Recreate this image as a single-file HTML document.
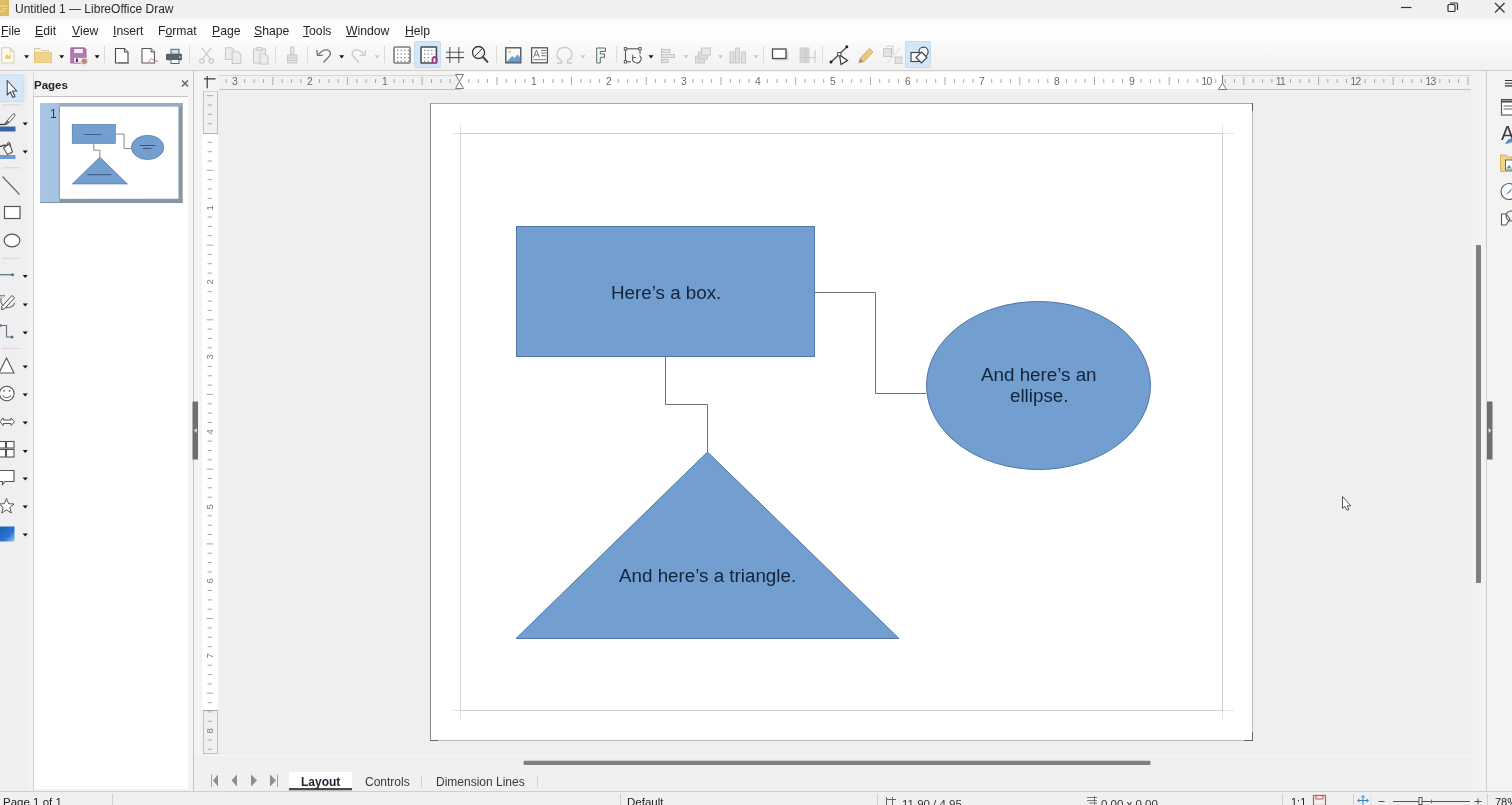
<!DOCTYPE html><html><head><meta charset="utf-8"><style>

*{margin:0;padding:0;box-sizing:border-box}
html,body{width:1512px;height:805px;overflow:hidden;background:#f0f0f0;font-family:"Liberation Sans",sans-serif;color:#1b1b1b}
body{position:relative}
.a{position:absolute}
.t{position:absolute;white-space:nowrap;line-height:1;z-index:2;will-change:transform}
.m{position:absolute;z-index:2;will-change:transform;top:24.8px;font-size:12.2px;color:#262626;white-space:nowrap;line-height:1}
.m u{text-decoration:underline;text-underline-offset:1px;text-decoration-thickness:1px}
svg{position:absolute;left:0;top:0;z-index:1}

</style></head><body>
<div class="a" style="left:0px;top:0px;width:1512px;height:20px;background:linear-gradient(#f0f0f0 0,#f1f1f1 80%,#f8f8f8 100%)"></div>
<div class="a" style="left:0px;top:20px;width:1512px;height:21px;background:#fdfdfd"></div>
<div class="a" style="left:0px;top:41px;width:1512px;height:29px;background:linear-gradient(#fbfbfb,#f1f1f1)"></div>
<div class="a" style="left:0px;top:70px;width:1512px;height:1px;background:#cdcdcd"></div>
<div class="a" style="left:0px;top:71px;width:33px;height:720px;background:#f0eef0"></div>
<div class="a" style="left:28px;top:71px;width:5px;height:720px;background:#f4f3f4"></div>
<div class="a" style="left:33px;top:71px;width:1px;height:720px;background:#d9d9d9"></div>
<div class="a" style="left:34px;top:71px;width:159px;height:720px;background:#f3f3f3"></div>
<div class="a" style="left:33px;top:96px;width:155px;height:693px;background:#fff;border-left:1px solid #cfcfcf;border-top:1px solid #c4c4c4"></div>
<div class="a" style="left:193px;top:71px;width:1px;height:720px;background:#c6c6c6"></div>
<div class="a" style="left:194px;top:71px;width:1293px;height:720px;background:#f0eef1"></div>
<div class="a" style="left:194px;top:71px;width:9px;height:684px;background:#f4f3f4"></div>
<div class="a" style="left:194px;top:71px;width:1277px;height:4px;background:#f4f3f4"></div>
<div class="a" style="left:194px;top:71px;width:25px;height:20px;background:#f4f3f4"></div>
<div class="a" style="left:1471px;top:71px;width:15px;height:720px;background:#f3f2f3"></div>
<div class="a" style="left:194px;top:755px;width:1277px;height:36px;background:#f0f0f0;border-top:1px solid #f7f7f7"></div>
<div class="a" style="left:1486px;top:71px;width:1px;height:720px;background:#cfcfcf"></div>
<div class="a" style="left:1487px;top:71px;width:25px;height:720px;background:#f3f3f3"></div>
<div class="a" style="left:430px;top:103px;width:823px;height:638px;background:#fff;border-left:1px solid #8a8a8a;border-top:1px solid #a8a8a8;border-right:1px solid #bdbdbd;border-bottom:1px solid #bdbdbd"></div>
<div class="a" style="left:1252px;top:103px;width:1px;height:8px;background:#555"></div>
<div class="a" style="left:430px;top:740px;width:8px;height:1px;background:#666"></div>
<div class="a" style="left:1252px;top:732px;width:1px;height:9px;background:#666"></div>
<div class="a" style="left:1244px;top:740px;width:9px;height:1px;background:#666"></div>
<div class="a" style="left:0px;top:791px;width:1512px;height:14px;background:#f0f0f0;border-top:1px solid #cfcfcf"></div>
<div class="t" style="left:14.5px;top:2.5px;font-size:12px;color:#2a2a2a;">Untitled 1 — LibreOffice Draw</div>
<div class="m" style="left:1px"><u>F</u>ile</div>
<div class="m" style="left:35px"><u>E</u>dit</div>
<div class="m" style="left:72px"><u>V</u>iew</div>
<div class="m" style="left:113px"><u>I</u>nsert</div>
<div class="m" style="left:158px">F<u>o</u>rmat</div>
<div class="m" style="left:211.5px"><u>P</u>age</div>
<div class="m" style="left:254px"><u>S</u>hape</div>
<div class="m" style="left:302.8px"><u>T</u>ools</div>
<div class="m" style="left:345.8px"><u>W</u>indow</div>
<div class="m" style="left:405px"><u>H</u>elp</div>
<div class="a" style="left:219px;top:75px;width:241px;height:15px;background:#f2f1f2;border-top:1px solid #d6d6d6;border-bottom:1px solid #c2c2c2"></div>
<div class="a" style="left:1223px;top:75px;width:248px;height:15px;background:#f2f1f2;border-top:1px solid #d6d6d6;border-bottom:1px solid #c2c2c2"></div>
<div class="a" style="left:459px;top:72px;width:764px;height:17px;background:#fff"></div>
<div class="t" style="left:225.4px;top:77.2px;width:19px;text-align:center;font-size:10.3px;letter-spacing:-0.7px;color:#6a6a6a">3</div>
<div class="t" style="left:300.1px;top:77.2px;width:19px;text-align:center;font-size:10.3px;letter-spacing:-0.7px;color:#6a6a6a">2</div>
<div class="t" style="left:374.8px;top:77.2px;width:19px;text-align:center;font-size:10.3px;letter-spacing:-0.7px;color:#6a6a6a">1</div>
<div class="t" style="left:524.2px;top:77.2px;width:19px;text-align:center;font-size:10.3px;letter-spacing:-0.7px;color:#6a6a6a">1</div>
<div class="t" style="left:598.9px;top:77.2px;width:19px;text-align:center;font-size:10.3px;letter-spacing:-0.7px;color:#6a6a6a">2</div>
<div class="t" style="left:673.6px;top:77.2px;width:19px;text-align:center;font-size:10.3px;letter-spacing:-0.7px;color:#6a6a6a">3</div>
<div class="t" style="left:748.3px;top:77.2px;width:19px;text-align:center;font-size:10.3px;letter-spacing:-0.7px;color:#6a6a6a">4</div>
<div class="t" style="left:823.0px;top:77.2px;width:19px;text-align:center;font-size:10.3px;letter-spacing:-0.7px;color:#6a6a6a">5</div>
<div class="t" style="left:897.7px;top:77.2px;width:19px;text-align:center;font-size:10.3px;letter-spacing:-0.7px;color:#6a6a6a">6</div>
<div class="t" style="left:972.4px;top:77.2px;width:19px;text-align:center;font-size:10.3px;letter-spacing:-0.7px;color:#6a6a6a">7</div>
<div class="t" style="left:1047.1px;top:77.2px;width:19px;text-align:center;font-size:10.3px;letter-spacing:-0.7px;color:#6a6a6a">8</div>
<div class="t" style="left:1121.8px;top:77.2px;width:19px;text-align:center;font-size:10.3px;letter-spacing:-0.7px;color:#6a6a6a">9</div>
<div class="t" style="left:1196.5px;top:77.2px;width:19px;text-align:center;font-size:10.3px;letter-spacing:-0.7px;color:#6a6a6a">10</div>
<div class="t" style="left:1271.2px;top:77.2px;width:19px;text-align:center;font-size:10.3px;letter-spacing:-0.7px;color:#6a6a6a">11</div>
<div class="t" style="left:1345.9px;top:77.2px;width:19px;text-align:center;font-size:10.3px;letter-spacing:-0.7px;color:#6a6a6a">12</div>
<div class="t" style="left:1420.6px;top:77.2px;width:19px;text-align:center;font-size:10.3px;letter-spacing:-0.7px;color:#6a6a6a">13</div>
<div class="a" style="left:203px;top:91px;width:15px;height:43px;background:#f2f1f2;border:1px solid #c2c2c2;border-top:1px solid #d6d6d6;border-bottom:1px solid #b0b0b0"></div>
<div class="a" style="left:203px;top:710px;width:15px;height:44px;background:#f0f0f0;border:1px solid #c2c2c2;border-top:1px solid #a8a8a8"></div>
<div class="a" style="left:202px;top:134px;width:16px;height:576px;background:#fff"></div>
<div class="t" style="left:199.5px;top:202.7px;width:20px;height:10px;text-align:center;font-size:9.5px;letter-spacing:-0.5px;color:#7a7a7a;transform:rotate(-90deg)">1</div>
<div class="t" style="left:199.5px;top:277.4px;width:20px;height:10px;text-align:center;font-size:9.5px;letter-spacing:-0.5px;color:#7a7a7a;transform:rotate(-90deg)">2</div>
<div class="t" style="left:199.5px;top:352.1px;width:20px;height:10px;text-align:center;font-size:9.5px;letter-spacing:-0.5px;color:#7a7a7a;transform:rotate(-90deg)">3</div>
<div class="t" style="left:199.5px;top:426.8px;width:20px;height:10px;text-align:center;font-size:9.5px;letter-spacing:-0.5px;color:#7a7a7a;transform:rotate(-90deg)">4</div>
<div class="t" style="left:199.5px;top:501.5px;width:20px;height:10px;text-align:center;font-size:9.5px;letter-spacing:-0.5px;color:#7a7a7a;transform:rotate(-90deg)">5</div>
<div class="t" style="left:199.5px;top:576.2px;width:20px;height:10px;text-align:center;font-size:9.5px;letter-spacing:-0.5px;color:#7a7a7a;transform:rotate(-90deg)">6</div>
<div class="t" style="left:199.5px;top:650.9px;width:20px;height:10px;text-align:center;font-size:9.5px;letter-spacing:-0.5px;color:#7a7a7a;transform:rotate(-90deg)">7</div>
<div class="t" style="left:199.5px;top:725.6px;width:20px;height:10px;text-align:center;font-size:9.5px;letter-spacing:-0.5px;color:#7a7a7a;transform:rotate(-90deg)">8</div>
<div class="t" style="left:611px;top:284px;font-size:18.8px;color:#13233a;">Here’s a box.</div>
<div class="t" style="left:980.5px;top:366px;font-size:18.8px;color:#13233a;">And here’s an</div>
<div class="t" style="left:1010px;top:386.5px;font-size:18.8px;color:#13233a;">ellipse.</div>
<div class="t" style="left:619px;top:567px;font-size:18.8px;color:#13233a;">And here’s a triangle.</div>
<div class="t" style="left:34px;top:79.5px;font-size:11.5px;font-weight:bold;color:#222">Pages</div>
<div class="t" style="left:49.5px;top:108px;font-size:12px;color:#2e3c4c">1</div>
<div class="t" style="left:1500.5px;top:124px;font-size:19.5px;color:#3b3b3b">A</div>
<div class="t" style="left:301px;top:775.5px;font-size:12px;font-weight:bold;color:#1c2330">Layout</div>
<div class="t" style="left:365px;top:775.5px;font-size:12px;color:#3a3a3a">Controls</div>
<div class="t" style="left:435.5px;top:775.5px;font-size:12px;color:#3a3a3a">Dimension Lines</div>
<div class="t" style="left:3px;top:797px;font-size:11.5px;color:#222">Page 1 of 1</div>
<div class="t" style="left:627px;top:797px;font-size:11.5px;color:#222">Default</div>
<div class="t" style="left:902px;top:798.5px;font-size:11.5px;color:#333">11.90 / 4.95</div>
<div class="t" style="left:1101px;top:798.5px;font-size:11.5px;color:#333">0.00 x 0.00</div>
<div class="t" style="left:1291px;top:797px;font-size:11px;color:#222">1:1</div>
<div class="t" style="left:1495px;top:797px;font-size:11px;color:#222">78%</div>
<svg width="1512" height="805" viewBox="0 0 1512 805"><path d="M-4 -1 H9 V16 H-4 Z" fill="#dcbc66"/><path d="M0 6 H7 M3 8.5 H7 M0 11 H5" stroke="#f2dc9c" stroke-width="1.2"/><path d="M1401 7.5 H1411.5" stroke="#333" stroke-width="1.2"/><rect x="1448" y="4.5" width="7" height="7" rx="1" fill="none" stroke="#333" stroke-width="1.2"/><path d="M1450 3 H1456.5 Q1457.5 3 1457.5 4 V10" fill="none" stroke="#333" stroke-width="1.2"/><path d="M1495 3 L1504.5 12.5 M1504.5 3 L1495 12.5" stroke="#333" stroke-width="1.2"/><path d="M226.1 79.0 V83.0 M244.7 79.0 V83.0 M254.1 79.0 V83.0 M263.4 79.0 V83.0 M272.8 77.0 V85.0 M282.1 79.0 V83.0 M291.4 79.0 V83.0 M300.8 79.0 V83.0 M319.4 79.0 V83.0 M328.8 79.0 V83.0 M338.1 79.0 V83.0 M347.4 77.0 V85.0 M356.8 79.0 V83.0 M366.1 79.0 V83.0 M375.5 79.0 V83.0 M394.1 79.0 V83.0 M403.5 79.0 V83.0 M412.8 79.0 V83.0 M422.1 77.0 V85.0 M431.5 79.0 V83.0 M440.8 79.0 V83.0 M450.2 79.0 V83.0 M468.8 79.0 V83.0 M478.2 79.0 V83.0 M487.5 79.0 V83.0 M496.9 77.0 V85.0 M506.2 79.0 V83.0 M515.5 79.0 V83.0 M524.9 79.0 V83.0 M543.5 79.0 V83.0 M552.9 79.0 V83.0 M562.2 79.0 V83.0 M571.5 77.0 V85.0 M580.9 79.0 V83.0 M590.2 79.0 V83.0 M599.6 79.0 V83.0 M618.2 79.0 V83.0 M627.6 79.0 V83.0 M636.9 79.0 V83.0 M646.2 77.0 V85.0 M655.6 79.0 V83.0 M664.9 79.0 V83.0 M674.3 79.0 V83.0 M692.9 79.0 V83.0 M702.3 79.0 V83.0 M711.6 79.0 V83.0 M721.0 77.0 V85.0 M730.3 79.0 V83.0 M739.6 79.0 V83.0 M749.0 79.0 V83.0 M767.6 79.0 V83.0 M777.0 79.0 V83.0 M786.3 79.0 V83.0 M795.7 77.0 V85.0 M805.0 79.0 V83.0 M814.3 79.0 V83.0 M823.7 79.0 V83.0 M842.3 79.0 V83.0 M851.7 79.0 V83.0 M861.0 79.0 V83.0 M870.4 77.0 V85.0 M879.7 79.0 V83.0 M889.0 79.0 V83.0 M898.4 79.0 V83.0 M917.0 79.0 V83.0 M926.4 79.0 V83.0 M935.7 79.0 V83.0 M945.0 77.0 V85.0 M954.4 79.0 V83.0 M963.7 79.0 V83.0 M973.1 79.0 V83.0 M991.7 79.0 V83.0 M1001.1 79.0 V83.0 M1010.4 79.0 V83.0 M1019.8 77.0 V85.0 M1029.1 79.0 V83.0 M1038.4 79.0 V83.0 M1047.8 79.0 V83.0 M1066.4 79.0 V83.0 M1075.8 79.0 V83.0 M1085.1 79.0 V83.0 M1094.5 77.0 V85.0 M1103.8 79.0 V83.0 M1113.1 79.0 V83.0 M1122.5 79.0 V83.0 M1141.1 79.0 V83.0 M1150.5 79.0 V83.0 M1159.8 79.0 V83.0 M1169.2 77.0 V85.0 M1178.5 79.0 V83.0 M1187.8 79.0 V83.0 M1197.2 79.0 V83.0 M1215.8 79.0 V83.0 M1225.2 79.0 V83.0 M1234.5 79.0 V83.0 M1243.8 77.0 V85.0 M1253.2 79.0 V83.0 M1262.5 79.0 V83.0 M1271.9 79.0 V83.0 M1290.5 79.0 V83.0 M1299.9 79.0 V83.0 M1309.2 79.0 V83.0 M1318.6 77.0 V85.0 M1327.9 79.0 V83.0 M1337.2 79.0 V83.0 M1346.6 79.0 V83.0 M1365.2 79.0 V83.0 M1374.6 79.0 V83.0 M1383.9 79.0 V83.0 M1393.2 77.0 V85.0 M1402.6 79.0 V83.0 M1411.9 79.0 V83.0 M1421.3 79.0 V83.0 M1439.9 79.0 V83.0 M1449.3 79.0 V83.0 M1458.6 79.0 V83.0 M1468.0 77.0 V85.0" stroke="#a8a8a8" stroke-width="1"/><path d="M455.5 74.5 H463.5 L459.5 81.5 Z M455.5 88.5 H463.5 L459.5 81.5 Z" fill="#fff" stroke="#7a7a7a" stroke-width="1"/><path d="M1218.5 89.5 H1226.5 L1222.5 83 Z" fill="#fff" stroke="#7a7a7a" stroke-width="1"/><path d="M1222.5 75 V83" stroke="#7a7a7a"/><path d="M204 78.8 H215.5 M207.2 76 V88.3" stroke="#3a3a44" stroke-width="1.2"/><path d="M206.6 95.7 H213.1 M207.6 105.0 H212.1 M207.6 114.3 H212.1 M207.6 123.7 H212.1 M207.6 142.3 H212.1 M207.6 151.7 H212.1 M207.6 161.0 H212.1 M206.6 170.3 H213.1 M207.6 179.7 H212.1 M207.6 189.0 H212.1 M207.6 198.4 H212.1 M207.6 217.0 H212.1 M207.6 226.4 H212.1 M207.6 235.7 H212.1 M206.6 245.1 H213.1 M207.6 254.4 H212.1 M207.6 263.7 H212.1 M207.6 273.1 H212.1 M207.6 291.7 H212.1 M207.6 301.1 H212.1 M207.6 310.4 H212.1 M206.6 319.8 H213.1 M207.6 329.1 H212.1 M207.6 338.4 H212.1 M207.6 347.8 H212.1 M207.6 366.4 H212.1 M207.6 375.8 H212.1 M207.6 385.1 H212.1 M206.6 394.4 H213.1 M207.6 403.8 H212.1 M207.6 413.1 H212.1 M207.6 422.5 H212.1 M207.6 441.1 H212.1 M207.6 450.5 H212.1 M207.6 459.8 H212.1 M206.6 469.2 H213.1 M207.6 478.5 H212.1 M207.6 487.8 H212.1 M207.6 497.2 H212.1 M207.6 515.8 H212.1 M207.6 525.2 H212.1 M207.6 534.5 H212.1 M206.6 543.9 H213.1 M207.6 553.2 H212.1 M207.6 562.5 H212.1 M207.6 571.9 H212.1 M207.6 590.5 H212.1 M207.6 599.9 H212.1 M207.6 609.2 H212.1 M206.6 618.5 H213.1 M207.6 627.9 H212.1 M207.6 637.2 H212.1 M207.6 646.6 H212.1 M207.6 665.2 H212.1 M207.6 674.6 H212.1 M207.6 683.9 H212.1 M206.6 693.2 H213.1 M207.6 702.6 H212.1 M207.6 711.9 H212.1 M207.6 721.3 H212.1 M207.6 739.9 H212.1 M207.6 749.3 H212.1" stroke="#a8a8a8" stroke-width="1"/><path d="M460 133.5 H1223 M460 710.5 H1223 M460.5 133 V711 M1222.5 133 V711" stroke="#d0d0d0" stroke-width="1"/><path d="M452 133.5 H460 M1223 133.5 H1234 M452 710.5 H460 M1223 710.5 H1234 M460.5 124 V133 M1222.5 124 V133 M460.5 711 V720 M1222.5 711 V720" stroke="#e6e6e6" stroke-width="1"/><g fill="#729fcf" stroke="#4f76a6" stroke-width="1">
<rect x="516.5" y="226.5" width="298" height="130"/>
<ellipse cx="1038.5" cy="385.5" rx="112" ry="84"/>
<polygon points="707.5,452 516,638.5 899,638.5"/>
</g>
<g fill="none" stroke="#707070" stroke-width="1">
<polyline points="815,292.5 875.5,292.5 875.5,393.5 926,393.5"/>
<polyline points="665.5,357 665.5,404.5 707.5,404.5 707.5,452"/>
</g><rect x="414.5" y="41.5" width="26" height="26" rx="1.5" fill="#d5e7f6" stroke="#c3dcf1"/><rect x="905.5" y="41.5" width="25" height="26" rx="1.5" fill="#d5e7f6" stroke="#c3dcf1"/><path d="M1.8 47.8 H10 L14 51.8 V63 H1.8 Z" fill="#fdfaf3" stroke="#d9ccb4" stroke-width="1.1"/><path d="M10 47.8 V51.8 H14" fill="none" stroke="#d9ccb4"/><path d="M4.5 58.5 L7 54 L8.5 56.5 L11 53.5 L10.5 59 Z" fill="#e9c25a" opacity=".9"/><path d="M24.1 55.199999999999996 H29.1 L26.6 58.4 Z" fill="#111"/><path d="M34.5 62.5 V48.5 H40 L42 50.5 H48.5 V52" fill="#f7f1e2" stroke="#d6c9ad" stroke-width="1"/><path d="M34.5 62.5 V52.5 H51.5 V62.5 Z" fill="#efd48b" stroke="#e3c274" stroke-width=".8"/><path d="M59.2 55.199999999999996 H64.2 L61.7 58.4 Z" fill="#111"/><path d="M70.8 47.8 H84.5 L86 49.3 V63 H70.8 Z" fill="#b47ab2" stroke="#9a5a98" stroke-width=".8"/><rect x="73.8" y="48.6" width="9.4" height="5" fill="#f8eef8" stroke="#9a5a98" stroke-width=".6"/><rect x="73.8" y="57.3" width="8.4" height="5.7" fill="#f8eef8" stroke="#9a5a98" stroke-width=".6"/><rect x="76" y="58.5" width="1.8" height="3.5" fill="#3a2a3a"/><circle cx="84.3" cy="61.3" r="3.3" fill="#b78b80" stroke="#f6ecea" stroke-width=".9"/><path d="M94.6 55.199999999999996 H99.6 L97.1 58.4 Z" fill="#111"/><path d="M104.5 46 V63" stroke="#dcdcdc" stroke-width="1"/><path d="M115.5 48.5 H124.5 L128 52 V63 H115.5 Z" fill="#fff" stroke="#484848" stroke-width="1.1"/><path d="M124.5 48.5 V52 H128" fill="#e8e8e8" stroke="#484848" stroke-width="1"/><path d="M118 62.8 H129" stroke="#707070" stroke-width="1.2"/><path d="M142 48.5 H151 L154.5 52 V63 H142 Z" fill="#fff" stroke="#5a5a5a" stroke-width="1.1"/><path d="M151 48.5 V52 H154.5" fill="#e8e8e8" stroke="#5a5a5a" stroke-width="1"/><path d="M148.5 63 Q151 57 152.5 59 Q153 61.5 158 61" fill="none" stroke="#c87aa8" stroke-width="1"/><rect x="171" y="49.3" width="8" height="5" fill="#c6e2f3" stroke="#5a6468" stroke-width="1"/><rect x="166" y="53.8" width="16" height="6.5" rx="1" fill="#5a6268"/><rect x="179" y="56.5" width="1.5" height="1.2" fill="#fff"/><rect x="171" y="59.5" width="8" height="4" fill="#fff" stroke="#5a6468" stroke-width="1"/><path d="M189.5 46 V63" stroke="#dcdcdc" stroke-width="1"/><g stroke="#c9c9c9" stroke-width="1.2" fill="none"><path d="M201.5 47.6 L210.5 59 M211.5 47.6 L202.5 59"/><circle cx="202" cy="61" r="2.2"/><circle cx="211.3" cy="61" r="2.2"/></g><g fill="#ececec" stroke="#c9c9c9" stroke-width="1.1"><path d="M225.5 47.8 H231.5 L234 50.3 V59.5 H225.5 Z"/><path d="M232.2 51.8 H238.2 L240.8 54.3 V63.5 H232.2 Z"/></g><g fill="#ececec" stroke="#c9c9c9" stroke-width="1.1"><rect x="253.5" y="49" width="12" height="14"/><rect x="257" y="47.5" width="5" height="3"/><path d="M260 54 H265.5 L268 56.5 V64 H260 Z"/></g><path d="M275.5 46 V63" stroke="#dcdcdc" stroke-width="1"/><g fill="#e4e4e4" stroke="#c9c9c9" stroke-width="1"><rect x="290.5" y="47" width="3.5" height="7.5"/><path d="M287.5 55 H297 V63 H287.5 Z"/></g><path d="M288 58 H296.5 M288 60.5 H296.5" stroke="#c9c9c9"/><path d="M307.5 46 V63" stroke="#dcdcdc" stroke-width="1"/><g fill="none" stroke="#6b7476" stroke-width="1.3"><path d="M318.5 54.5 Q323 49 327.5 50 Q331.5 51.5 330 55.5 L323.5 62.5"/><path d="M316.8 50 L317.5 55.3 L322.8 55.3"/></g><path d="M339.2 55.199999999999996 H344.2 L341.7 58.4 Z" fill="#111"/><g fill="none" stroke="#c9c9c9" stroke-width="1.3"><path d="M364 54.5 Q359.5 49 355 50 Q351 51.5 352.5 55.5 L359 62.5"/><path d="M365.5 50 L365 55.3 L359.7 55.3"/></g><path d="M374.5 55.199999999999996 H379.5 L377 58.4 Z" fill="#c9c9c9"/><path d="M384.5 46 V63" stroke="#dcdcdc" stroke-width="1"/><rect x="394" y="47" width="16" height="16" rx="1" fill="#fff" stroke="#7c7c7c" stroke-width="1.6"/><g fill="#8a8a8a"><rect x="397.0" y="49.8" width="1.3" height="1.3"/><rect x="397.0" y="53.4" width="1.3" height="1.3"/><rect x="397.0" y="57.0" width="1.3" height="1.3"/><rect x="397.0" y="60.6" width="1.3" height="1.3"/><rect x="400.6" y="49.8" width="1.3" height="1.3"/><rect x="400.6" y="53.4" width="1.3" height="1.3"/><rect x="400.6" y="57.0" width="1.3" height="1.3"/><rect x="400.6" y="60.6" width="1.3" height="1.3"/><rect x="404.2" y="49.8" width="1.3" height="1.3"/><rect x="404.2" y="53.4" width="1.3" height="1.3"/><rect x="404.2" y="57.0" width="1.3" height="1.3"/><rect x="404.2" y="60.6" width="1.3" height="1.3"/><rect x="407.8" y="49.8" width="1.3" height="1.3"/><rect x="407.8" y="53.4" width="1.3" height="1.3"/><rect x="407.8" y="57.0" width="1.3" height="1.3"/><rect x="407.8" y="60.6" width="1.3" height="1.3"/></g><rect x="421" y="47" width="15.5" height="16" rx=".5" fill="#fff" stroke="#434c52" stroke-width="1.5"/><g fill="#8a8a8a"><rect x="424.0" y="49.8" width="1.3" height="1.3"/><rect x="424.0" y="53.4" width="1.3" height="1.3"/><rect x="424.0" y="57.0" width="1.3" height="1.3"/><rect x="424.0" y="60.6" width="1.3" height="1.3"/><rect x="427.6" y="49.8" width="1.3" height="1.3"/><rect x="427.6" y="53.4" width="1.3" height="1.3"/><rect x="427.6" y="57.0" width="1.3" height="1.3"/><rect x="427.6" y="60.6" width="1.3" height="1.3"/><rect x="431.2" y="49.8" width="1.3" height="1.3"/><rect x="431.2" y="53.4" width="1.3" height="1.3"/><rect x="434.8" y="49.8" width="1.3" height="1.3"/><rect x="434.8" y="53.4" width="1.3" height="1.3"/></g><path d="M432.5 63 V58.5 Q434.5 55.5 436.5 58.5 V63" fill="none" stroke="#a0307a" stroke-width="1.8"/><g stroke="#555" stroke-width="1.1"><path d="M449.8 47 V63 M458.8 47 V63"/><path d="M446 52.2 H464 M446 57.6 H464"/></g><g fill="none" stroke="#3a3a3a" stroke-width="1.3"><circle cx="478.5" cy="52.5" r="6"/><path d="M482.8 57 L488 62.3" stroke-width="1.8"/><path d="M474.5 56.5 L482.5 48.5" stroke-width="1"/></g><path d="M496.5 46 V63" stroke="#dcdcdc" stroke-width="1"/><rect x="505.8" y="47.8" width="15" height="15" fill="#fbf9f4" stroke="#4b4b4b" stroke-width="1.3"/><path d="M507 62 L512 56.5 L514.5 58.5 L517.5 55 L520.2 58 V62 Z" fill="#6d9fd8" stroke="#4a7fc0" stroke-width=".6"/><circle cx="509.6" cy="51.8" r="1.4" fill="#d8cba8"/><rect x="531.6" y="47.8" width="15.8" height="15" fill="#fff" stroke="#555" stroke-width="1.3"/><path d="M533.5 57.5 L536.5 50 L539.5 57.5 M534.7 55 H538.3" fill="none" stroke="#6f7a80" stroke-width="1"/><path d="M541 50.5 H546 M541 53 H546 M541 55.8 H546 M533.5 59.8 H546" stroke="#6f7a80" stroke-width="1.1"/><path d="M557 63 H561.5 V60.5 Q556.5 58 557 53.5 Q558 47.5 564.5 47.5 Q571 47.5 572 53.5 Q572.5 58 567.5 60.5 V63 H572" fill="none" stroke="#c9c9c9" stroke-width="1.3"/><path d="M580.5 55.199999999999996 H585.5 L583 58.4 Z" fill="#c9c9c9"/><path d="M596.7 48 H605.5 V51.5 H600.3 V54 H604.5 V57.3 H600.3 V63 H596.7 Z" fill="#eefafa" stroke="#606a6a" stroke-width="1"/><path d="M616.5 46 V63" stroke="#dcdcdc" stroke-width="1"/><g fill="none" stroke="#555" stroke-width="1.1"><rect x="625.5" y="48.8" width="14.5" height="13"/></g><g fill="#fff" stroke="#555" stroke-width=".9"><rect x="624.3" y="47.6" width="2.4" height="2.4"/><rect x="638.8" y="47.6" width="2.4" height="2.4"/><rect x="624.3" y="60.6" width="2.4" height="2.4"/></g><rect x="631" y="54" width="11" height="10" fill="#fbfbfb"/><path d="M639.5 55.5 A4.2 4.2 0 1 1 633 57" fill="none" stroke="#555" stroke-width="1.1"/><path d="M632.8 54.5 V57.5 H635.8" fill="none" stroke="#555" stroke-width="1"/><path d="M648.5 55.199999999999996 H653.5 L651 58.4 Z" fill="#111"/><g fill="#e6e6e6" stroke="#c9c9c9" stroke-width="1.1"><path d="M661.5 47.5 V63.5"/><rect x="662" y="49.5" width="8" height="3"/><rect x="662" y="54.5" width="12.5" height="3"/><rect x="662" y="59.5" width="6" height="3"/></g><path d="M683.5 55.199999999999996 H688.5 L686 58.4 Z" fill="#c9c9c9"/><g fill="#dcdcdc" stroke="#c9c9c9" stroke-width="1"><rect x="695.5" y="56" width="9" height="7"/><rect x="698.5" y="52" width="9" height="7"/><rect x="701.5" y="48" width="9" height="7" fill="#e8e8e8"/></g><path d="M718.1 55.199999999999996 H723.1 L720.6 58.4 Z" fill="#c9c9c9"/><g fill="#e0e0e0" stroke="#c9c9c9" stroke-width="1"><rect x="730" y="52" width="4" height="11"/><rect x="741.5" y="52" width="4" height="11"/><rect x="735.5" y="48" width="4" height="15"/></g><path d="M753.5 55.199999999999996 H758.5 L756 58.4 Z" fill="#c9c9c9"/><path d="M763.5 46 V63" stroke="#dcdcdc" stroke-width="1"/><rect x="774.5" y="51" width="14" height="9.5" fill="#d8d8d8"/><rect x="772.5" y="49" width="13.5" height="9.5" fill="#fff" stroke="#4a4a4a" stroke-width="1.3"/><rect x="799.5" y="47.5" width="10" height="15.5" fill="#d4d4d4"/><path d="M806 47.5 V63.5 M799.5 57.5 H815.5 M815 50 V63" stroke="#c9c9c9" stroke-width="1"/><path d="M822.5 46 V63" stroke="#dcdcdc" stroke-width="1"/><g stroke="#333" stroke-width="1.1" fill="none"><path d="M831 62 L847 46.8"/><path d="M839.5 55 L847.5 60.5 L841 64.5 Z"/></g><circle cx="831" cy="62" r="1.5" fill="#222"/><circle cx="846.8" cy="46.8" r="1.5" fill="#222"/><rect x="837.7" y="52.6" width="3.2" height="3.2" fill="#fff" stroke="#333" stroke-width=".9"/><path d="M860 58.5 L869.5 48.5 L873 52 L863.5 62 Z" fill="#ecc979" stroke="#d1aa55" stroke-width=".9"/><path d="M860 58.5 L858.3 63.3 L863.5 62 Z" fill="#9a8f7a"/><g fill="#e2e2e2" stroke="#c9c9c9" stroke-width="1"><rect x="883.5" y="48.5" width="8" height="8"/><rect x="895" y="57" width="7" height="6.5"/></g><path d="M886 47 L888 46 H893 V54" fill="none" stroke="#c9c9c9"/><path d="M887.5 62.5 L900 48" stroke="#d8d8d8" stroke-width="1"/><g fill="#fff" stroke="#3d4850" stroke-width="1.2"><circle cx="923.5" cy="51.8" r="4.6"/><rect x="911" y="52.5" width="9" height="9"/><path d="M921.5 52 L927 57.5 L921.5 63 L916 57.5 Z"/></g><rect x="-1" y="75" width="25" height="26.5" rx="1.5" fill="#d5e7f6" stroke="#c6ddf1"/><path d="M7.2 80.5 V95 L10.3 91.8 L13 97.5 L15 96.5 L12.4 91 H16.8 Z" fill="#fff" stroke="#434c52" stroke-width="1.1" stroke-linejoin="round"/><path d="M2 104.8 H21" stroke="#d6d6d6" stroke-width="1"/><path d="M2 167.8 H21" stroke="#d6d6d6" stroke-width="1"/><path d="M2 258.3 H21" stroke="#d6d6d6" stroke-width="1"/><path d="M2 348.4 H21" stroke="#d6d6d6" stroke-width="1"/><path d="M0 124.5 H5" stroke="#333" stroke-width="1.3"/><path d="M7.3 120.6 L12.6 114.6 Q14.3 113 15 114.6 Q15.3 115.6 14.2 116.8 L9 122.5 Z" fill="#fff" stroke="#555" stroke-width="1"/><path d="M7.3 120.6 L9 122.5 Q7 125 4.5 124.8 Q5 122.5 7.3 120.6 Z" fill="#777" stroke="#555" stroke-width=".8"/><rect x="0" y="126.5" width="15.5" height="5" fill="#3767a6"/><path d="M22.7 122.5 H27.7 L25.2 125.6 Z" fill="#111"/><path d="M0 146.5 L5 145 L6.5 148" fill="none" stroke="#444" stroke-width="1.4"/><path d="M3.5 148 L9.5 143.5 L12.5 152 L7.5 154.5 Z" fill="#fff" stroke="#555" stroke-width="1.1" stroke-linejoin="round"/><path d="M7 146 Q7.5 141 9.5 142.5 Q10.5 144 9.8 146.5" fill="none" stroke="#555" stroke-width="1"/><rect x="0" y="155" width="15.5" height="4" fill="#6f9bd0"/><path d="M22.7 150.5 H27.7 L25.2 153.6 Z" fill="#111"/><path d="M2.5 176.5 L19.5 194.5" stroke="#6a6a6a" stroke-width="1.2"/><rect x="4.5" y="206.5" width="15.5" height="12" fill="#fff" stroke="#555" stroke-width="1.2"/><ellipse cx="12" cy="240.5" rx="7.8" ry="6.3" fill="#fff" stroke="#555" stroke-width="1.2"/><path d="M0 274.7 H12" stroke="#4d7373" stroke-width="1.2"/><circle cx="12.5" cy="274.7" r="1.5" fill="#4d7373"/><path d="M22.7 275.0 H27.7 L25.2 278.1 Z" fill="#111"/><path d="M0 295.8 H5" stroke="#666" stroke-width="1"/><path d="M1.5 297.5 A7.2 7.2 0 1 0 14.8 303" fill="none" stroke="#707070" stroke-width="1.1"/><path d="M2 306.5 L12 295.5 L14.5 297.8 L4.5 308.8 L1.5 309.5 Z" fill="#fff" stroke="#4a4a4a" stroke-width="1"/><path d="M22.7 303.5 H27.7 L25.2 306.6 Z" fill="#111"/><path d="M0 325.5 H6.5 V337 H12" fill="none" stroke="#557777" stroke-width="1.1"/><circle cx="12" cy="337" r="1.5" fill="#4d7373"/><circle cx="0.5" cy="325.5" r="1.3" fill="#4d7373"/><path d="M22.7 331.5 H27.7 L25.2 334.6 Z" fill="#111"/><path d="M6.5 358 L14 373 H-1 Z" fill="#fff" stroke="#555" stroke-width="1.1"/><path d="M22.7 365.5 H27.7 L25.2 368.6 Z" fill="#111"/><circle cx="6.8" cy="393.5" r="7.3" fill="#fff" stroke="#555" stroke-width="1.1"/><circle cx="4" cy="390.8" r=".9" fill="#555"/><circle cx="9.6" cy="390.8" r=".9" fill="#555"/><path d="M2.5 395.5 Q6.8 399.8 11.2 395.5" fill="none" stroke="#555" stroke-width="1"/><path d="M22.7 393.5 H27.7 L25.2 396.6 Z" fill="#111"/><path d="M0 421.8 L3.2 418 V420 H11 V418 L14.5 421.8 L11 425.5 V423.5 H3.2 V425.5 Z" fill="#fff" stroke="#555" stroke-width="1"/><path d="M22.7 421.5 H27.7 L25.2 424.6 Z" fill="#111"/><g fill="#fff" stroke="#555" stroke-width="1.1"><rect x="-1" y="441.5" width="6.5" height="6.5"/><rect x="6.5" y="441.5" width="7.5" height="6.5"/><rect x="-1" y="449.5" width="6.5" height="7.5"/><rect x="6.5" y="449.5" width="7.5" height="7.5"/></g><path d="M22.7 450.0 H27.7 L25.2 453.1 Z" fill="#111"/><path d="M-1 470.5 H14 V481.5 H5 L2.5 484.5 V481.5 H-1 Z" fill="#fff" stroke="#555" stroke-width="1.1"/><path d="M22.7 477.5 H27.7 L25.2 480.6 Z" fill="#111"/><path d="M6.5 498.5 L8.6 503.7 L14 504 L9.8 507.4 L11.3 513 L6.5 509.8 L1.7 513 L3.2 507.4 L-1 504 L4.4 503.7 Z" fill="#fff" stroke="#555" stroke-width="1"/><path d="M22.7 505.5 H27.7 L25.2 508.6 Z" fill="#111"/><defs><linearGradient id="g3d" x1="0" y1="0" x2="1" y2="1"><stop offset="0" stop-color="#1f5fb0"/><stop offset=".6" stop-color="#2a76d2"/><stop offset="1" stop-color="#9cc4ee"/></linearGradient></defs><path d="M0 526.5 H14.5 V540 Q14.5 541.5 13 541.5 H0 Z" fill="url(#g3d)"/><path d="M22.7 533.5 H27.7 L25.2 536.6 Z" fill="#111"/><path d="M182 80.5 L188 86.5 M188 80.5 L182 86.5" stroke="#555" stroke-width="1.1"/><defs><linearGradient id="gsel" x1="0" y1="0" x2="1" y2="0"><stop offset="0" stop-color="#a9c6e4"/><stop offset="1" stop-color="#8eafd3"/></linearGradient></defs><rect x="40" y="103" width="142.5" height="100" fill="url(#gsel)"/><rect x="178.5" y="103" width="4" height="100" fill="#8d979f"/><rect x="59.5" y="198.8" width="123" height="4.2" fill="#8d979f"/><rect x="59.5" y="103" width="123" height="3.5" fill="#9aabbd"/><rect x="40" y="202" width="142.5" height="1" fill="#7f93a8"/><rect x="59.8" y="106.7" width="118.6" height="92" fill="#fff"/><path d="M59.3 106.5 V199" stroke="#8d979f" stroke-width="1"/><rect x="72.21" y="124.45" width="43.14" height="18.90" fill="#729fcf" stroke="#4f6f98" stroke-width=".6"/><ellipse cx="147.60" cy="147.46" rx="16.23" ry="12.19" fill="#729fcf" stroke="#4f6f98" stroke-width=".6"/><polygon points="99.84,157.05 72.21,183.96 127.47,183.96" fill="#729fcf" stroke="#4f6f98" stroke-width=".6"/><polyline points="115.35,134.04 124.08,134.04 124.08,148.61 131.36,148.61" fill="none" stroke="#888" stroke-width="1"/><polyline points="93.78,143.35 93.78,150.20 99.84,150.20 99.84,157.05" fill="none" stroke="#888" stroke-width="1"/><path d="M84.4 134.4 H101.6" stroke="#1a2638" stroke-width=".7" opacity=".85"/><path d="M139.6 145.5 H155.3" stroke="#1a2638" stroke-width=".7" opacity=".85"/><path d="M143 148.5 H151.5" stroke="#1a2638" stroke-width=".7" opacity=".85"/><path d="M87.4 174.7 H111.3" stroke="#1a2638" stroke-width=".7" opacity=".85"/><rect x="192.5" y="401.5" width="5.5" height="58" fill="#6f6f6f"/><path d="M193.8 430.5 L196.8 428 V433 Z" fill="#ddd"/><rect x="1487" y="401.5" width="5.5" height="58" fill="#6f6f6f"/><path d="M1491.5 430.5 L1488.5 428 V433 Z" fill="#ddd"/><rect x="1476" y="245" width="5" height="338" rx="1" fill="#808080"/><rect x="523.5" y="760.8" width="627" height="4.2" rx="1" fill="#808080"/><path d="M1505 80.5 H1512 M1505 83.2 H1512 M1505 85.9 H1512" stroke="#333" stroke-width="1.1"/><rect x="1501.5" y="99.5" width="14" height="15.5" fill="#fff" stroke="#555" stroke-width="1.1"/><path d="M1501.5 101.5 H1515" stroke="#555" stroke-width="2.2"/><path d="M1503.5 106 H1512 M1503.5 109 H1512" stroke="#666" stroke-width="1"/><path d="M1505 144 Q1509 137 1513 139 L1512 142 Q1508 144 1505 144 Z" fill="#5a8cc8"/><path d="M1500.5 155 H1506 L1508 157 H1512 V171.5 H1500.5 Z" fill="#f1d48d" stroke="#d9b45e" stroke-width="1"/><rect x="1505.5" y="160" width="7" height="10" fill="#fff" stroke="#555" stroke-width=".9"/><path d="M1506.5 168.5 L1509 165 L1512 168.5 Z" fill="#4a8fd0"/><circle cx="1509" cy="191.5" r="8" fill="#fff" stroke="#555" stroke-width="1.1"/><path d="M1505.5 195 L1512 188 Q1511 193 1505.5 195 Z" fill="#4a7fc0"/><path d="M1501.5 214 H1506 L1510 219 L1506 225 H1501.5 Z" fill="#fff" stroke="#555" stroke-width="1.1"/><circle cx="1511" cy="216" r="5" fill="none" stroke="#555" stroke-width="1.1"/><rect x="289" y="772" width="63" height="18" fill="#fff"/><rect x="289" y="788" width="63" height="2.3" fill="#4a4a4a"/><path d="M421.5 776 V787 M537.5 776 V787" stroke="#d0d0d0" stroke-width="1"/><g fill="#8e8e8e"><path d="M211.5 774.5 V787" stroke="#a0a0a0" stroke-width="1"/><path d="M218 774.5 V786.5 L213 780.5 Z"/><path d="M237 774.5 V786.5 L231.5 780.5 Z"/><path d="M251 774.5 V786.5 L257 780.5 Z"/><path d="M270 774.5 V786.5 L276 780.5 Z"/><path d="M277.5 774.5 V787" stroke="#a0a0a0" stroke-width="1"/></g><path d="M112.5 794 V805" stroke="#cfcfcf" stroke-width="1"/><path d="M620.5 794 V805" stroke="#cfcfcf" stroke-width="1"/><path d="M877.5 794 V805" stroke="#cfcfcf" stroke-width="1"/><path d="M1282.5 794 V805" stroke="#cfcfcf" stroke-width="1"/><path d="M1353.5 794 V805" stroke="#cfcfcf" stroke-width="1"/><path d="M1487.5 794 V805" stroke="#cfcfcf" stroke-width="1"/><path d="M886.5 797 V805 M886.5 799.5 H896 M892.5 797 V805" stroke="#666" stroke-width="1"/><path d="M1087 797.5 H1097 M1087 800.5 H1097 M1094.5 796 V805 M1089 803 H1097" stroke="#777" stroke-width="1"/><rect x="1313.5" y="795.5" width="12" height="10" fill="none" stroke="#d05060" stroke-width="1.2"/><rect x="1316" y="795.5" width="7" height="3.5" fill="none" stroke="#d05060" stroke-width="1"/><path d="M1363 796 V805 M1358 800.5 H1368" stroke="#3a80c0" stroke-width="1"/><path d="M1361.3 797.5 L1363 795.5 L1364.7 797.5 M1359.5 798.8 L1357.5 800.5 L1359.5 802.2 M1366.5 798.8 L1368.5 800.5 L1366.5 802.2" fill="none" stroke="#3a80c0" stroke-width="1"/><path d="M1371 794 V805" stroke="#dcdcdc" stroke-width="1"/><path d="M1378.5 801.5 H1384.5 M1393 801.5 H1470 M1474.5 801.5 H1481.5 M1478 798.5 V804.5" stroke="#555" stroke-width="1"/><rect x="1419" y="797.5" width="3" height="7" fill="#fff" stroke="#555" stroke-width="1"/><path d="M1431.5 799.5 V803.5" stroke="#777"/><path d="M1342.5 496.5 V508.5 L1345 506.5 L1347 510.3 L1349 509.5 L1347.2 505.8 H1350.8 Z" fill="#fff" stroke="#555" stroke-width="1" stroke-linejoin="round"/></svg>
</body></html>
